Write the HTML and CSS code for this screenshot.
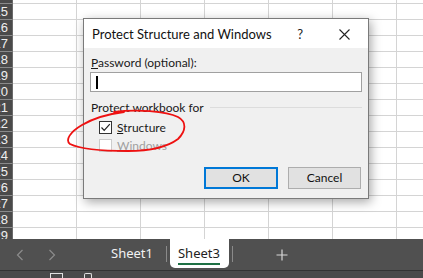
FILE: index.html
```html
<!DOCTYPE html>
<html>
<head>
<meta charset="utf-8">
<link rel="stylesheet" href="styles.css">
</head>
<body>
<div class="app">
  <div class="grid">
    <div class="row"><div class="rh">14</div><div class="c"></div><div class="c"></div><div class="c"></div><div class="c"></div><div class="c"></div><div class="c"></div><div class="c"></div></div>
    <div class="row"><div class="rh">15</div><div class="c"></div><div class="c"></div><div class="c"></div><div class="c"></div><div class="c"></div><div class="c"></div><div class="c"></div></div>
    <div class="row"><div class="rh">16</div><div class="c"></div><div class="c"></div><div class="c"></div><div class="c"></div><div class="c"></div><div class="c"></div><div class="c"></div></div>
    <div class="row"><div class="rh">17</div><div class="c"></div><div class="c"></div><div class="c"></div><div class="c"></div><div class="c"></div><div class="c"></div><div class="c"></div></div>
    <div class="row"><div class="rh">18</div><div class="c"></div><div class="c"></div><div class="c"></div><div class="c"></div><div class="c"></div><div class="c"></div><div class="c"></div></div>
    <div class="row"><div class="rh">19</div><div class="c"></div><div class="c"></div><div class="c"></div><div class="c"></div><div class="c"></div><div class="c"></div><div class="c"></div></div>
    <div class="row"><div class="rh">20</div><div class="c"></div><div class="c"></div><div class="c"></div><div class="c"></div><div class="c"></div><div class="c"></div><div class="c"></div></div>
    <div class="row"><div class="rh">21</div><div class="c"></div><div class="c"></div><div class="c"></div><div class="c"></div><div class="c"></div><div class="c"></div><div class="c"></div></div>
    <div class="row"><div class="rh">22</div><div class="c"></div><div class="c"></div><div class="c"></div><div class="c"></div><div class="c"></div><div class="c"></div><div class="c"></div></div>
    <div class="row"><div class="rh">23</div><div class="c"></div><div class="c"></div><div class="c"></div><div class="c"></div><div class="c"></div><div class="c"></div><div class="c"></div></div>
    <div class="row"><div class="rh">24</div><div class="c"></div><div class="c"></div><div class="c"></div><div class="c"></div><div class="c"></div><div class="c"></div><div class="c"></div></div>
    <div class="row"><div class="rh">25</div><div class="c"></div><div class="c"></div><div class="c"></div><div class="c"></div><div class="c"></div><div class="c"></div><div class="c"></div></div>
    <div class="row"><div class="rh">26</div><div class="c"></div><div class="c"></div><div class="c"></div><div class="c"></div><div class="c"></div><div class="c"></div><div class="c"></div></div>
    <div class="row"><div class="rh">27</div><div class="c"></div><div class="c"></div><div class="c"></div><div class="c"></div><div class="c"></div><div class="c"></div><div class="c"></div></div>
    <div class="row"><div class="rh">28</div><div class="c"></div><div class="c"></div><div class="c"></div><div class="c"></div><div class="c"></div><div class="c"></div><div class="c"></div></div>
    <div class="row"><div class="rh">29</div><div class="c"></div><div class="c"></div><div class="c"></div><div class="c"></div><div class="c"></div><div class="c"></div><div class="c"></div></div>
  </div>
  <div class="tabbar">
    <div class="nav">
      <svg class="arrow" width="8" height="12" viewBox="0 0 8 12"><path d="M6.5 1 L1.5 6 L6.5 11" fill="none" stroke="#8c8c8c" stroke-width="1.2"/></svg>
      <svg class="arrow" width="8" height="12" viewBox="0 0 8 12"><path d="M1.5 1 L6.5 6 L1.5 11" fill="none" stroke="#8c8c8c" stroke-width="1.2"/></svg>
    </div>
    <div class="tab">Sheet1</div>
    <div class="sep"></div>
    <div class="tab active"><span class="tabtext">Sheet3</span></div>
    <div class="sep"></div>
    <svg class="plus" width="12" height="12" viewBox="0 0 12 12"><path d="M6 0.5 V11.5 M0.5 6 H11.5" stroke="#d8d8d8" stroke-width="1.2"/></svg>
  </div>
  <div class="status">
    <span class="sicon sq"></span>
    <span class="sicon gear"></span>
  </div>

  <div class="dialog">
    <div class="titlebar">
      <span class="title">Protect Structure and Windows</span>
      <span class="help">?</span>
      <svg class="close" width="11" height="11" viewBox="0 0 11 11"><path d="M0.5 0.5 L10.5 10.5 M10.5 0.5 L0.5 10.5" stroke="#222" stroke-width="1.1"/></svg>
    </div>
    <div class="body">
      <div class="label"><u>P</u>assword (optional):</div>
      <div class="input"><span class="caret"></span></div>
      <div class="group"><span>Protect workbook for</span><span class="gline"></span></div>
      <div class="check"><span class="box"><svg width="11" height="11" viewBox="0 0 11 11"><path d="M1.5 5.5 L4.2 8.3 L9.8 2.2" fill="none" stroke="#222" stroke-width="1.2"/></svg></span><span><u>S</u>tructure</span></div>
      <div class="check disabled"><span class="box"></span><span><u>W</u>indows</span></div>
      <div class="buttons">
        <div class="btn default">OK</div>
        <div class="btn">Cancel</div>
      </div>
    </div>
  </div>

  <svg class="scribble" width="130" height="50" viewBox="0 0 130 50">
    <path d="M48 4 C 70 1, 100 3, 112 9 C 121 14, 120 23, 112 31 C 100 40, 80 43, 62 43 C 40 43, 14 41, 4 36 C -1 32, 4 24, 16 17 C 28 10, 42 6, 58 4" fill="none" stroke="#ee1111" stroke-width="1.8" stroke-linecap="round"/>
  </svg>
</div>
</body>
</html>
```
FILE: styles.css
```css
* { box-sizing: border-box; }
html, body { margin: 0; padding: 0; }
body {
  width: 423px;
  height: 278px;
  overflow: hidden;
  background: #fff;
  font-family: "Noto Sans", "Open Sans", sans-serif;
}
.app {
  position: relative;
  width: 423px;
  height: 278px;
  display: flex;
  flex-direction: column;
  overflow: hidden;
}
.grid {
  height: 239px;
  overflow: hidden;
  display: flex;
  flex-direction: column;
  flex: none;
}
.row {
  display: flex;
  height: 16px;
  flex: none;
}
.row:first-child { margin-top: -12px; }
.rh {
  width: 13px;
  flex: none;
  background: #4a4a4a;
  color: #eeeeee;
  font-family: "Liberation Sans", sans-serif;
  font-size: 13px;
  line-height: 15px;
  display: flex;
  justify-content: flex-end;
  padding-right: 4px;
  overflow: hidden;
  border-bottom: 1px solid #8a8a8a;
  border-right: 1px solid #6a6a6a;
}
.c {
  width: 64px;
  flex: none;
  border-right: 1px solid #d4d4d4;
  border-bottom: 1px solid #d4d4d4;
}
.tabbar {
  height: 32px;
  flex: none;
  background: #505050;
  display: flex;
  align-items: flex-start;
  border-bottom: 1px solid #333;
}
.nav {
  display: flex;
  gap: 24px;
  padding-left: 16px;
  margin-top: 10px;
  width: 100px;
}
.tab {
  height: 29px;
  color: #f2f2f2;
  font-size: 13px;
  line-height: 29px;
  padding: 0 10px 0 11px;
}
.sep {
  width: 1px;
  height: 16px;
  background: #8a8a8a;
  margin: 7px 3px 0 3px;
}
.tab.active {
  background: #fff;
  color: #222;
  border-radius: 0 0 5px 5px;
  padding: 0 8px;
  width: 59px;
  line-height: 28px;
}
.tabtext {
  display: inline-block;
  border-bottom: 2px solid #1e7145;
  line-height: 20px;
}
.plus {
  margin: 10px 0 0 40px;
}
.status {
  flex: 1;
  background: #4a4a4a;
  position: relative;
}
.sicon {
  position: absolute;
  top: 2px;
  border: 1px solid #e0e0e0;
  border-bottom: none;
}
.sq { left: 50px; width: 13px; height: 8px; }
.gear { left: 84px; width: 8px; height: 8px; border-radius: 2px 2px 0 0; }

.dialog {
  position: absolute;
  left: 83px;
  top: 18px;
  width: 286px;
  height: 181px;
  background: #f0f0f0;
  border: 1px solid #7a7a7a;
  box-shadow: 2px 3px 10px rgba(0,0,0,0.35);
  display: flex;
  flex-direction: column;
  font-family: "Lato", "Noto Sans", sans-serif;
  font-size: 12px;
  color: #1a1a1a;
}
.titlebar {
  height: 29px;
  flex: none;
  background: #fff;
  display: flex;
  align-items: center;
  padding-left: 8px;
}
.title {
  font-size: 13px;
  color: #111;
  flex: 1;
  margin-top: 1px;
}
.help {
  font-size: 13px;
  color: #222;
  margin-right: 36px;
  margin-top: 1px;
}
.close { margin-right: 18px; margin-top: 1px; }
.body {
  display: flex;
  flex-direction: column;
  padding: 0 6px 0 6px;
}
.label {
  margin-top: 7px;
  line-height: 16px;
  padding-left: 1px;
}
.input {
  margin-top: 1px;
  height: 20px;
  background: #fff;
  border: 1px solid #a0a0a0;
  position: relative;
}
.caret {
  position: absolute;
  left: 5px;
  top: 3px;
  width: 2px;
  height: 13px;
  background: #000;
}
.group {
  margin-top: 8px;
  line-height: 15px;
  display: flex;
  align-items: center;
  padding-left: 1px;
}
.gline {
  flex: 1;
  height: 1px;
  background: #dcdcdc;
  margin-left: 6px;
}
.check {
  display: flex;
  align-items: center;
  line-height: 15px;
  margin-top: 5px;
  padding-left: 9px;
}
.check + .check { margin-top: 3px; }
.box {
  width: 13px;
  height: 13px;
  border: 1px solid #333;
  background: #fff;
  margin-right: 5px;
  display: flex;
  align-items: center;
  justify-content: center;
}
.check.disabled { color: #a0a0a0; }
.check.disabled .box { border-color: #cccccc; }
.buttons {
  margin-top: 14px;
  display: flex;
  justify-content: flex-end;
  gap: 10px;
  padding-right: 1px;
}
.btn {
  width: 73px;
  height: 22px;
  background: #e1e1e1;
  border: 1px solid #adadad;
  text-align: center;
  line-height: 20px;
  color: #111;
}
.btn.default {
  width: 74px;
  border: 2px solid #0078d7;
  line-height: 18px;
}
.scribble {
  position: absolute;
  left: 66px;
  top: 108px;
}
```
